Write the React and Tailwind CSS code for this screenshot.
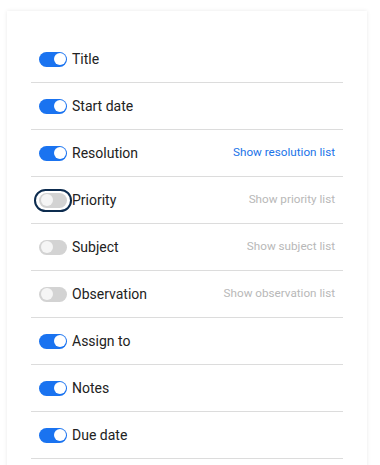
const rows = [
  { label: "Title", on: true },
  { label: "Start date", on: true },
  { label: "Resolution", on: true, link: "Show resolution list" },
  { label: "Priority", on: false, link: "Show priority list", focus: true },
  { label: "Subject", on: false, link: "Show subject list" },
  { label: "Observation", on: false, link: "Show observation list" },
  { label: "Assign to", on: true },
  { label: "Notes", on: true },
  { label: "Due date", on: true },
];

function Toggle({ on, focus }) {
  return (
    <span
      className={
        "flex items-center justify-center w-[38px] h-[23px] rounded-[12px] -mx-[5px] " +
        (focus ? "border-2 border-[#0d2c4f]" : "border-2 border-transparent")
      }
    >
      <span
        className={
          "flex items-center w-[28px] h-[15px] rounded-full px-[1.5px] " +
          (on ? "bg-[#1a73f0] justify-end" : "bg-[#d3d3d3] justify-start")
        }
      >
        <span
          className={
            "w-[12px] h-[12px] rounded-full " + (on ? "bg-white" : "bg-[#f5f5f5]")
          }
        />
      </span>
    </span>
  );
}

export default function App() {
  return (
    <div className="w-[380px] h-[465px] bg-white pt-[11px] pl-[7px] font-['Roboto',sans-serif] overflow-hidden">
      <div className="w-[360px] bg-white shadow-[0_0_4px_rgba(0,0,0,0.09)] pt-[25px] px-[24px] pb-[24px]">
        {rows.map((r) => (
          <div
            key={r.label}
            className="flex items-center h-[47px] pl-[8px] pr-[8px] border-b border-[#dcdcdc]"
          >
            <Toggle on={r.on} focus={r.focus} />
            <span className="ml-[5px] text-[14px] text-[#222]">{r.label}</span>
            {r.link && (
              <span
                className={
                  "ml-auto text-[11.7px] " +
                  (r.on ? "text-[#1a73e8]" : "text-[#b8b8b8]")
                }
              >
                {r.link}
              </span>
            )}
          </div>
        ))}
      </div>
    </div>
  );
}
